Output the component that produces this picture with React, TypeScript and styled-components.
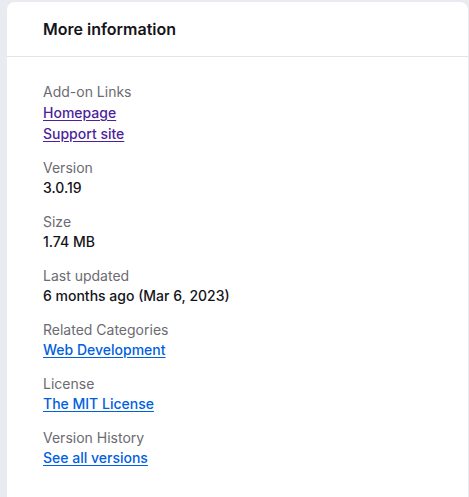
import React from "react";
import styled, { createGlobalStyle } from "styled-components";

const GlobalStyle = createGlobalStyle`
    body {
        margin: 0;
        background-color: #e8ebef;
        font-family: Inter, "Noto Sans", sans-serif;
        -webkit-font-smoothing: antialiased;
    }
`;

const Page = styled.div`
    padding: 2px 1px 0 7px;
`;

const Card = styled.section`
    background-color: #fff;
    border-radius: 8px;
    min-height: 520px;
`;

const CardHeader = styled.header`
    padding: 16px 36px;
    border-bottom: 1px solid #e3e4e8;

    h2 {
        margin: 0;
        font-size: 16px;
        line-height: 22px;
        font-weight: 600;
        color: #15141a;
    }
`;

const DefinitionList = styled.dl`
    margin: 0;
    padding: 25px 36px;
`;

const Group = styled.div`
    margin-bottom: 14px;
`;

const Term = styled.dt`
    font-size: 14px;
    line-height: 20px;
    color: #6b6b72;
`;

const Detail = styled.dd`
    margin: 0;
    font-size: 14px;
    line-height: 20px;
    font-weight: 500;
    color: #15141a;
`;

const InfoLink = styled.a<{ $visited?: boolean; $stacked?: boolean }>`
    display: ${(p) => (p.$stacked ? "block" : "inline")};
    line-height: ${(p) => (p.$stacked ? "21px" : "20px")};
    color: ${(p) => (p.$visited ? "#4e1f9c" : "#0060df")};
    font-weight: 500;
    text-decoration: underline;
    text-underline-offset: 2px;
`;

const MoreInformation: React.FC = () => (
    <Card>
        <CardHeader>
            <h2>More information</h2>
        </CardHeader>
        <DefinitionList>
            <Group>
                <Term>Add-on Links</Term>
                <Detail>
                    <InfoLink href="#" $visited $stacked>Homepage</InfoLink>
                    <InfoLink href="#" $visited $stacked>Support site</InfoLink>
                </Detail>
            </Group>
            <Group>
                <Term>Version</Term>
                <Detail>3.0.19</Detail>
            </Group>
            <Group>
                <Term>Size</Term>
                <Detail>1.74 MB</Detail>
            </Group>
            <Group>
                <Term>Last updated</Term>
                <Detail>6 months ago (Mar 6, 2023)</Detail>
            </Group>
            <Group>
                <Term>Related Categories</Term>
                <Detail>
                    <InfoLink href="#">Web Development</InfoLink>
                </Detail>
            </Group>
            <Group>
                <Term>License</Term>
                <Detail>
                    <InfoLink href="#">The MIT License</InfoLink>
                </Detail>
            </Group>
            <Group>
                <Term>Version History</Term>
                <Detail>
                    <InfoLink href="#">See all versions</InfoLink>
                </Detail>
            </Group>
        </DefinitionList>
    </Card>
);

const App: React.FC = () => (
    <Page>
        <GlobalStyle />
        <MoreInformation />
    </Page>
);

export default App;
